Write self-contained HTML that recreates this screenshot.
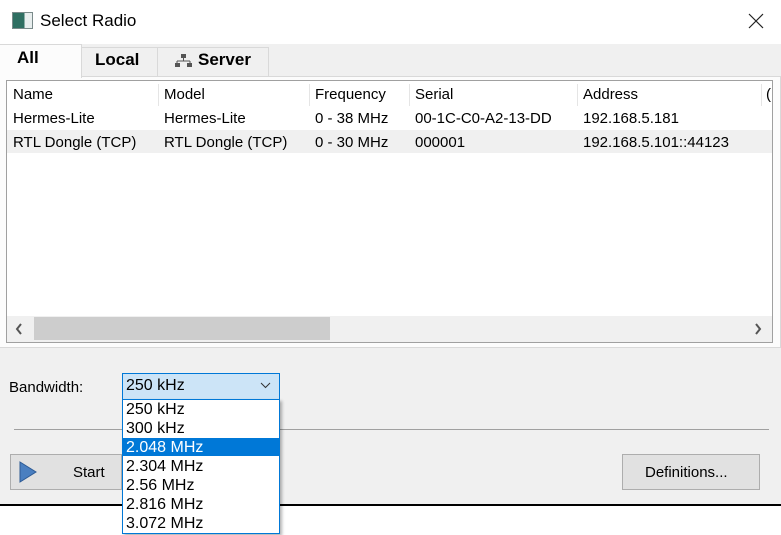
<!DOCTYPE html><html><head><style>
*{margin:0;padding:0;box-sizing:border-box}
body{width:781px;height:535px;background:#fff;font-family:"Liberation Sans",sans-serif;font-size:15px;color:#000;position:relative;overflow:hidden}
.a{position:absolute}
.cell{position:absolute;white-space:nowrap}
</style></head><body>
<div class="a" style="left:0;top:0;width:781px;height:44px;background:#fff"></div>
<div class="a" style="left:12px;top:12px;width:21px;height:17px;border:1px solid #7a8a8a;background:linear-gradient(90deg,#2f6f62 0,#2f6f62 60%,#e8eeee 60%)"></div>
<div class="a" style="left:40px;top:11px;font-size:17px">Select Radio</div>
<svg class="a" style="left:748px;top:13px" width="16" height="16"><path d="M1 1L15 15M15 1L1 15" stroke="#222" stroke-width="1.2"/></svg>
<div class="a" style="left:0;top:44px;width:781px;height:461px;background:#f0f0f0"></div>
<div class="a" style="left:81px;top:47px;width:77px;height:30px;background:#f0f0f0;border:1px solid #d9d9d9;border-bottom:none"></div>
<div class="a" style="left:157px;top:47px;width:112px;height:30px;background:#f0f0f0;border:1px solid #d9d9d9;border-bottom:none"></div>
<div class="a" style="left:0;top:76px;width:781px;height:272px;background:#fcfcfc;border:1px solid #d9d9d9;border-left:none"></div>
<div class="a" style="left:0;top:44px;width:82px;height:34px;background:#fcfcfc;border:1px solid #d9d9d9;border-bottom:none;border-left:none"></div>
<div class="a" style="left:17px;top:48px;font-weight:bold;font-size:17px">All</div>
<div class="a" style="left:95px;top:50px;font-weight:bold;font-size:17px">Local</div>
<svg class="a" style="left:174px;top:53px" width="19" height="14"><rect x="7" y="1" width="5" height="4" fill="#555"/><path d="M9.5 5V8M3 8H16M3 8V10M16 8V10" stroke="#555"/><rect x="1" y="10" width="5" height="4" fill="#555"/><rect x="13" y="10" width="5" height="4" fill="#555"/></svg>
<div class="a" style="left:198px;top:50px;font-weight:bold;font-size:17px">Server</div>
<div class="a" style="left:6px;top:80px;width:767px;height:263px;background:#fff;border:1px solid #a0a0a0"></div>
<div class="a" style="left:7px;top:130px;width:765px;height:23px;background:#f0f0f0"></div>
<div class="a" style="left:158px;top:84px;width:1px;height:22px;background:#e5e5e5"></div>
<div class="a" style="left:309px;top:84px;width:1px;height:22px;background:#e5e5e5"></div>
<div class="a" style="left:409px;top:84px;width:1px;height:22px;background:#e5e5e5"></div>
<div class="a" style="left:577px;top:84px;width:1px;height:22px;background:#e5e5e5"></div>
<div class="a" style="left:761px;top:84px;width:1px;height:22px;background:#e5e5e5"></div>
<div class="cell" style="left:13px;top:86px">Name</div><div class="cell" style="left:164px;top:86px">Model</div><div class="cell" style="left:315px;top:86px">Frequency</div><div class="cell" style="left:415px;top:86px">Serial</div><div class="cell" style="left:583px;top:86px">Address</div><div class="cell" style="left:766px;top:86px">(</div>
<div class="cell" style="left:13px;top:110px">Hermes-Lite</div><div class="cell" style="left:164px;top:110px">Hermes-Lite</div><div class="cell" style="left:315px;top:110px">0 - 38 MHz</div><div class="cell" style="left:415px;top:110px">00-1C-C0-A2-13-DD</div><div class="cell" style="left:583px;top:110px">192.168.5.181</div>
<div class="cell" style="left:13px;top:134px">RTL Dongle (TCP)</div><div class="cell" style="left:164px;top:134px">RTL Dongle (TCP)</div><div class="cell" style="left:315px;top:134px">0 - 30 MHz</div><div class="cell" style="left:415px;top:134px">000001</div><div class="cell" style="left:583px;top:134px">192.168.5.101::44123</div>
<div class="a" style="left:7px;top:316px;width:765px;height:26px;background:#f0f0f0"></div>
<div class="a" style="left:34px;top:317px;width:296px;height:23px;background:#cdcdcd"></div>
<svg class="a" style="left:15px;top:323px" width="8" height="12"><path d="M6 1L2 6L6 11" stroke="#555" stroke-width="2" fill="none"/></svg>
<svg class="a" style="left:754px;top:323px" width="8" height="12"><path d="M2 1L6 6L2 11" stroke="#555" stroke-width="2" fill="none"/></svg>
<div class="a" style="left:9px;top:379px">Bandwidth:</div>
<div class="a" style="left:14px;top:429px;width:755px;height:1px;background:#a0a0a0"></div>
<div class="a" style="left:10px;top:454px;width:112px;height:36px;background:#e1e1e1;border:1px solid #adadad"></div>
<svg class="a" style="left:19px;top:461px" width="18" height="22"><path d="M1 1 L17 11 L1 21 Z" fill="#4a7fc0" stroke="#2d5a94"/></svg>
<div class="a" style="left:73px;top:464px">Start</div>
<div class="a" style="left:622px;top:454px;width:138px;height:36px;background:#e1e1e1;border:1px solid #adadad"></div>
<div class="a" style="left:645px;top:464px">Definitions...</div>
<div class="a" style="left:0;top:504px;width:781px;height:2px;background:#000"></div>
<div class="a" style="left:122px;top:373px;width:158px;height:27px;background:#cce4f7;border:1px solid #0078d7"></div>
<div class="a" style="left:126px;top:377px;font-size:16px">250 kHz</div>
<svg class="a" style="left:260px;top:382px" width="11" height="7"><path d="M1 1L5.5 5.5L10 1" stroke="#333" fill="none"/></svg>
<div class="a" style="left:122px;top:399px;width:158px;height:135px;background:#fff;border:1px solid #0078d7;box-shadow:2px 2px 3px rgba(0,0,0,.3)"></div>
<div class="a" style="left:123px;top:438px;width:156px;height:18px;background:#0078d7"></div>
<div class="a" style="left:126px;top:400px;font-size:16px;line-height:19px">250 kHz<br>300 kHz<br><span style="color:#fff">2.048 MHz</span><br>2.304 MHz<br>2.56 MHz<br>2.816 MHz<br>3.072 MHz</div>
</body></html>
